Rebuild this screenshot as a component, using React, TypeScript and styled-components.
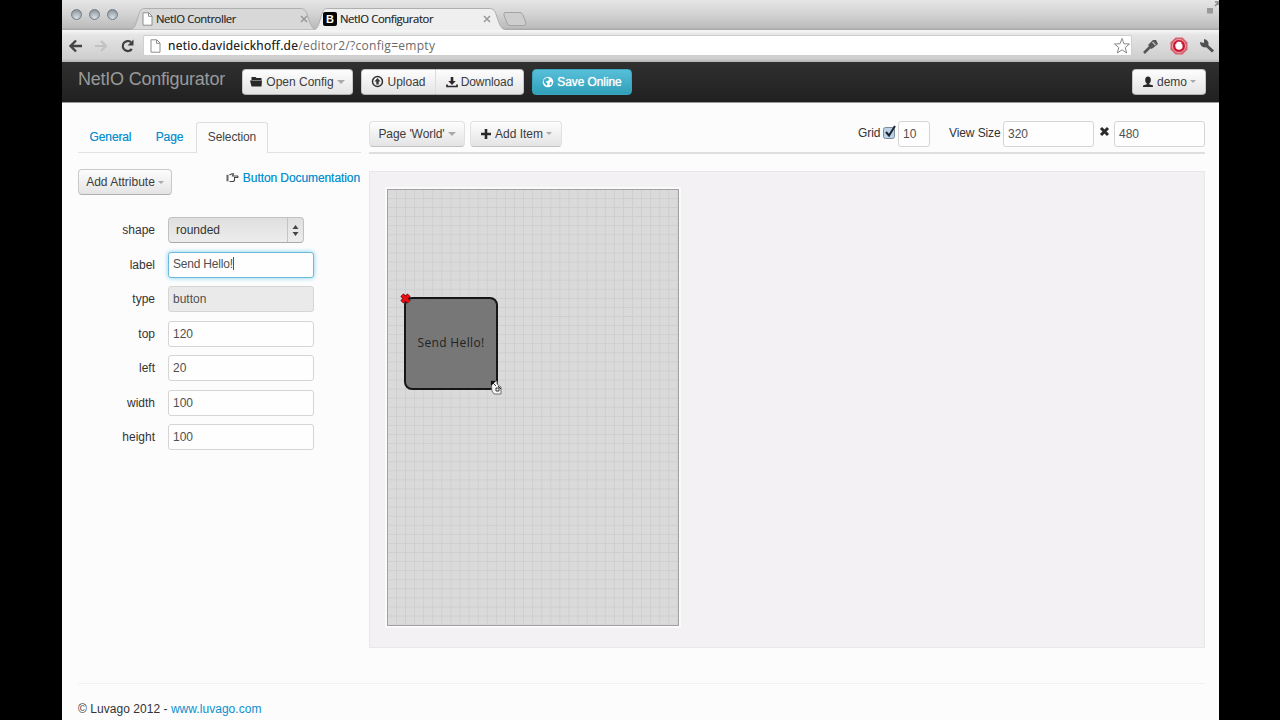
import React from "react";
import styled, { createGlobalStyle, css } from "styled-components";

const GlobalStyle = createGlobalStyle`
  * { box-sizing: border-box; }
  html, body { margin: 0; background: #000; }
  body { width: 1280px; height: 720px; overflow: hidden; }
`;

const sans = `"Liberation Sans", Arial, sans-serif`;
const chromeFont = `"Open Sans", "Noto Sans", sans-serif`;

const Screen = styled.div`
  width: 1280px;
  height: 720px;
  padding-left: 62px;
  overflow: hidden;
  background: #000;
  font-family: ${sans};
  font-size: 12px;
  color: #333;
`;
const Window = styled.div`
  width: 1157px;
  height: 720px;
  overflow: hidden;
  display: flex;
  flex-direction: column;
  background: #fdfcfd;
  white-space: nowrap;
`;

/* browser chrome */
const TitleBar = styled.div`
  height: 30px;
  flex: none;
  display: flex;
  align-items: flex-end;
  background: linear-gradient(#e6e5e5, #d5d4d4 45%, #bcbbbb 94%, #a9a8a8 97%);
`;
const Lights = styled.div`
  display: flex;
  gap: 7px;
  padding: 0 0 10px 9px;
  width: 68px;
`;
const Light = styled.i`
  width: 11px;
  height: 11px;
  border-radius: 50%;
  border: 1px solid #747c84;
  background: radial-gradient(circle at 50% 85%, #d9dfe3, #a4adb4 60%, #7e878f);
`;
const Tab = styled.div<{ $w: number; $pad: number; $end: number; $active?: boolean }>`
  position: relative;
  z-index: ${(p) => (p.$active ? 2 : 1)};
  width: ${(p) => p.$w}px;
  margin-right: -4px;
  height: 22px;
  padding: 0 ${(p) => p.$end}px 1px ${(p) => p.$pad}px;
  display: flex;
  align-items: center;
  font: 11px/16px ${chromeFont};
  color: #333;
`;
const TabShape = styled.svg`
  position: absolute;
  left: 0;
  top: 0;
  z-index: -1;
`;
const TabTitle = styled.span`
  flex: 1;
  margin-left: 3px;
  text-shadow: 0 0 0.6px #777;
  letter-spacing: -0.42px;
  font-size: 11.3px;
`;
const Favicon = styled.b`
  width: 14px;
  height: 14px;
  border-radius: 2px;
  background: #060606;
  color: #fff;
  font: bold 11px/14px ${sans};
  text-align: center;
`;
const Expand = styled.svg`
  margin-left: auto;
  align-self: flex-start;
`;
const Toolbar = styled.div`
  height: 32px;
  flex: none;
  display: flex;
  align-items: center;
  padding: 0 4px 0 6px;
  background: linear-gradient(#f7f7f7 0, #e6e5e5 5px, #cfcece 90%, #b5b5b5);
`;
const NavIcons = styled.div`
  display: flex;
  gap: 11px;
  width: 75px;
`;
const Address = styled.div`
  flex: 1;
  height: 21px;
  margin-top: -1px;
  display: flex;
  align-items: center;
  padding: 0 0 0 6px;
  border: 1px solid #d0cfcf;
  border-radius: 2px;
  background: #fff;
  font: 12px/18px ${chromeFont};
  color: #6b6b6b;
`;
const Url = styled.span`
  flex: 1;
  margin-left: 7px;
  letter-spacing: 0.29px;
  b { font-weight: 400; color: #222; text-shadow: 0 0 0.6px #888; }
`;
const Extensions = styled.div`
  width: 83px;
  display: flex;
  align-items: center;
  justify-content: space-between;
  padding-left: 10px;
`;

/* page navbar */
const NavBar = styled.div`
  height: 40px;
  flex: none;
  display: flex;
  align-items: center;
  padding: 0 13px 1px 16px;
  background: linear-gradient(#303030, #202020);
`;
const Brand = styled.div`
  width: 164px;
  padding-bottom: 5px;
  font-size: 18px;
  line-height: 20px;
  letter-spacing: -0.23px;
  color: #9a9a9a;
`;

const Button = styled.div<{ $w: number; $tone?: "info"; $ls?: number }>`
  width: ${(p) => p.$w}px;
  height: 26px;
  display: flex;
  align-items: center;
  justify-content: center;
  gap: 3px;
  border: 1px solid #c9c8c9;
  border-bottom-color: #b0b0b0;
  border-radius: 4px;
  background: linear-gradient(#fdfdfd, #e5e4e5);
  font-size: 12px;
  line-height: 14px;
  letter-spacing: ${(p) => p.$ls ?? 0}px;
  color: #3c3c3c;
  ${(p) => p.$tone === "info" && css`
    color: #fff;
    background: linear-gradient(#58bfd9, #30a0b8);
    border-color: #3ba5bd;
    text-shadow: 0 0 1px rgba(255, 255, 255, 0.8);
  `}
`;
const ButtonGroup = styled.div`
  display: flex;
  margin: 0 8px;
  ${Button}:first-child { border-radius: 4px 0 0 4px; border-right-color: #ddd; }
  ${Button}:last-child { border-radius: 0 4px 4px 0; border-left: 0; }
`;
const Spacer = styled.div`flex: 1;`;
const Caret = styled.i<{ $small?: boolean }>`
  border: ${(p) => (p.$small ? 3 : 4)}px solid transparent;
  border-bottom: 0;
  border-top-color: #aaa;
`;

/* content */
const Main = styled.div`
  height: 581px;
  flex: none;
  display: flex;
  padding: 19px 14px 0 16px;
  border-top: 1px solid #999;
`;
const Sidebar = styled.div`
  width: 283px;
  margin-right: 8px;
`;
const Tabs = styled.div`
  height: 31px;
  display: flex;
  border-bottom: 1px solid #e3e2e3;
`;
const NavTab = styled.div<{ $w: number; $active?: boolean }>`
  width: ${(p) => p.$w}px;
  height: 31px;
  padding-left: 1px;
  text-align: center;
  line-height: 30px;
  letter-spacing: -0.12px;
  color: #0a8fce;
  text-shadow: 0 0 0.6px #6bbfe4;
  ${(p) => p.$active && css`
    color: #444;
    text-shadow: none;
    padding-left: 0;
    background: #fdfcfd;
    border: 1px solid #dfdedf;
    border-bottom: 0;
    border-radius: 3px 3px 0 0;
    line-height: 29px;
  `}
`;
const SideHead = styled.div`
  display: flex;
  justify-content: space-between;
  margin-top: 16px;
  height: 48px;
`;
const DocLink = styled.div`
  display: flex;
  align-items: center;
  gap: 4px;
  height: 18px;
  margin-right: 1px;
  letter-spacing: -0.08px;
  color: #0a8fce;
  text-shadow: 0 0 0.6px #6bbfe4;
`;
const Field = styled.div`
  display: flex;
  align-items: center;
  height: 26px;
  margin-bottom: 8.55px;
`;
const Label = styled.label`
  width: 77px;
  margin-right: 13px;
  text-align: right;
`;
const Input = styled.div<{ $w: number; $focus?: boolean; $off?: boolean }>`
  width: ${(p) => p.$w}px;
  height: 26px;
  padding-left: 4px;
  line-height: 24px;
  border: 1px solid #d6d5d6;
  border-radius: 3px;
  background: ${(p) => (p.$off ? "#ebeaeb" : "#fefefe")};
  color: #505050;
  ${(p) => p.$focus && css`
    border-color: #6db9da;
    box-shadow: 0 0 5px #7fd0ee;
    letter-spacing: -0.2px;
    line-height: 23px;
  `}
`;
const TextCursor = styled.i`
  display: inline-block;
  width: 1px;
  height: 13px;
  background: #555;
  vertical-align: -2px;
`;
const Select = styled.div`
  width: 136px;
  height: 26px;
  display: flex;
  align-items: center;
  padding-left: 7px;
  border: 1px solid #c2c1c2;
  border-bottom-color: #aaa;
  border-radius: 4px;
  background: linear-gradient(#e0dfe0, #ededed);
`;
const SelectArrow = styled.span`
  margin-left: auto;
  width: 16px;
  height: 24px;
  display: flex;
  align-items: center;
  justify-content: center;
  border-left: 1px solid #c4c4c4;
`;
const Editor = styled.div`width: 836px;`;
const EditorBar = styled.div`
  height: 32px;
  display: flex;
  gap: 5px;
  border-bottom: 2px solid #e0dfe0;
`;
const EditorButton = styled(Button)`
  margin-top: -1px;
  height: 26px;
  padding-bottom: 1px;
  border-color: #e2e1e2;
  border-bottom-color: #c2c1c2;
`;
const Settings = styled.div`
  margin-left: auto;
  margin-top: -1px;
  height: 25px;
  display: flex;
  align-items: center;
`;
const SettingText = styled.span<{ $w: number; $before?: number }>`
  width: ${(p) => p.$w}px;
  margin-top: -2px;
  margin-left: ${(p) => p.$before ?? 0}px;
  letter-spacing: -0.1px;
`;
const CheckSvg = styled.svg`margin: -4px 2px 0 0;`;
const Stage = styled.div`
  height: 477px;
  margin-top: 17px;
  padding: 17px;
  border: 1px solid #e9e8e9;
  background: #f3f1f3;
`;
const Canvas = styled.div`
  position: relative;
  width: 292px;
  height: 437px;
  border: 1px solid #a3a2a3;
  box-shadow: 0 0 0 2px #fafafa;
  background-color: #dbdadb;
  background-image:
    linear-gradient(90deg, #cfcecf 1px, transparent 1px),
    linear-gradient(#cfcecf 1px, transparent 1px);
  background-size: 9.09px 9.09px;
  background-position: 8px 8px;
`;
const Widget = styled.div`
  position: absolute;
  left: 16px;
  top: 107px;
  width: 94px;
  height: 93px;
  border: 2px solid #161616;
  border-radius: 8px;
  background: #777;
  color: #222;
  letter-spacing: 0.35px;
  font: 12px/87px ${chromeFont};
  text-align: center;
`;
const Handle = styled.svg<{ $x: number; $y: number }>`
  position: absolute;
  left: ${(p) => p.$x}px;
  top: ${(p) => p.$y}px;
`;
const Footer = styled.footer`
  margin: 0 14px 0 16px;
  border-top: 1px solid #f2f1f2;
  padding-top: 18px;
  line-height: 15px;
  letter-spacing: 0.04px;
  a { color: #0a8fce; }
`;

const PageIcon = () => (
  <svg width="11" height="14" viewBox="0 0 11 14">
    <path d="M1 .8h5.8L10 4v9.2H1z" fill="#fff" stroke="#8d8d8d" />
    <path d="M6.5 1v3.3H10" fill="none" stroke="#8d8d8d" />
  </svg>
);
const CloseIcon = () => (
  <svg width="8" height="8" viewBox="0 0 8 8">
    <path d="M1 1l6 6M7 1L1 7" stroke="#989898" strokeWidth="1.5" />
  </svg>
);
const TimesIcon = () => (
  <svg width="11" height="11" viewBox="0 0 11 11">
    <path d="M2 2l7 7M9 2l-7 7" stroke="#2a2a2a" strokeWidth="3" />
  </svg>
);

const App = () => (
  <Screen>
    <GlobalStyle />
    <Window>
      <TitleBar>
        <Lights><Light /><Light /><Light /></Lights>
        <Tab $w={187} $pad={12} $end={9}>
          <TabShape width="187" height="22">
            <path d="M0 21.5C5 21 5 18 8 9C10 2 11 .5 15 .5H170C175 .5 176 3 178 9C181 18 182 21 187 21.5" fill="#d9d8d8" stroke="#b0afaf" />
          </TabShape>
          <PageIcon />
          <TabTitle>NetIO Controller</TabTitle>
          <CloseIcon />
        </Tab>
        <Tab $w={193} $pad={10} $end={15} $active>
          <TabShape width="193" height="22">
            <path d="M0 22C5 21 5 18 8 9C10 2 11 .5 15 .5H176C181 .5 182 3 184 9C187 18 188 21 193 22" fill="#f0efef" stroke="#b0afaf" />
          </TabShape>
          <Favicon>B</Favicon>
          <TabTitle>NetIO Configurator</TabTitle>
          <CloseIcon />
        </Tab>
        <svg width="26" height="20" viewBox="0 0 26 20">
          <path d="M3 2.5H18Q20 2.5 21 5L24 13Q24 15.500 22 15.500H8Q6 15.500 5 13L2 5Q1.500 2.500 3 2.500Z" fill="#cfcece" stroke="#a4a3a3" />
        </svg>
        <Expand width="12" height="16" viewBox="0 0 12 16">
          <path d="M0 8h6v5.500H0z" fill="#9a9999" />
          <path d="M8 6l3-3M8 2h3v3" fill="none" stroke="#888" strokeWidth="1.500" />
        </Expand>
      </TitleBar>
      <Toolbar>
        <NavIcons>
          <svg width="15" height="14" viewBox="0 0 15 14"><path d="M8 1.500L2.500 7L8 12.500M3 7h11" fill="none" stroke="#444" strokeWidth="2.400" /></svg>
          <svg width="15" height="14" viewBox="0 0 15 14"><path d="M7 2l5 5l-5 5M12 7H1" fill="none" stroke="#c2c2c2" strokeWidth="2.200" /></svg>
          <svg width="15" height="14" viewBox="0 0 15 14"><path d="M11.800 10A5 5 0 1 1 11 3.200" fill="none" stroke="#3f3f3f" strokeWidth="2.200" /><path d="M13.500.5V6.500H7.500z" fill="#3f3f3f" /></svg>
        </NavIcons>
        <Address>
          <PageIcon />
          <Url><b>netio.davideickhoff.de</b>/editor2/?config=empty</Url>
          <svg width="18" height="18" viewBox="0 0 18 18"><path d="M9 1.500l2 5.300 5.500.2-4.300 3.500 1.500 5.500L9 12.800 4.300 16l1.500-5.500L1.500 7 7 6.800z" fill="#fff" stroke="#888" /></svg>
        </Address>
        <Extensions>
          <svg width="17" height="17" viewBox="0 0 17 17"><path d="M2 15l6-6" stroke="#555" strokeWidth="2.600" /><path d="M6 7l5-5h3l2 4-5 4-2 1z" fill="#555" /><path d="M10.500 4l3 3" stroke="#bbb" strokeWidth="1.400" /></svg>
          <svg width="18" height="18" viewBox="0 0 18 18"><path d="M5.500.5h7l5 5v7l-5 5h-7l-5-5v-7z" fill="#d8606f" /><circle cx="9" cy="9" r="6.500" fill="#c91931" stroke="#eaa9b1" /><path d="M5.200 7.500L6.500 6.500V5.500L8 4.700h2L11.500 5.500V7L12.500 7.500V10Q12 12.800 9 12.800T5.500 10z" fill="#fff" /></svg>
          <svg width="16" height="16" viewBox="0 0 16 16"><path d="M6.500 6.500L14 13.500" stroke="#505050" strokeWidth="3" /><path d="M1 4l4 1V1Q10 2 9.500 6.500Q8 10.500 4 9Q1 7.500 1 4z" fill="#505050" /></svg>
        </Extensions>
      </Toolbar>
      <NavBar>
        <Brand>NetIO Configurator</Brand>
        <Button $w={111}>
          <svg width="13" height="11" viewBox="0 0 13 11"><path d="M1.500 4.500V1h4l1 1h5v2.500z" fill="#292929" /><path d="M0 4.500h12l-.5 6h-10z" fill="#292929" /><path d="M2.500 4.500h9" stroke="#999" strokeWidth=".6" /></svg>
          Open Config <Caret />
        </Button>
        <ButtonGroup>
          <Button $w={75}>
            <svg width="13" height="13" viewBox="0 0 13 13"><circle cx="6.500" cy="6.500" r="5" fill="none" stroke="#333" strokeWidth="1.500" /><path d="M6.500 3L9.500 6.500H7.700V9.500H5.300V6.500H3.500z" fill="#333" /></svg>
            Upload
          </Button>
          <Button $w={88} $ls={-0.1}>
            <svg width="12" height="12" viewBox="0 0 12 12"><path d="M4.700 1h2.600v4h2.500L6 9 2.200 5h2.500z" fill="#292929" /><path d="M1 8.500v2h10v-2" fill="none" stroke="#292929" strokeWidth="1.700" /></svg>
            Download
          </Button>
        </ButtonGroup>
        <Button $w={100} $tone="info" $ls={-0.1}>
          <svg width="12" height="12" viewBox="0 0 12 12"><circle cx="6" cy="6" r="5.300" fill="#fff" /><path d="M5 1.500L7.500 3 6 5 3.500 5.500 5.500 7.500 5 10 2 7 1.500 4zM8 6l2 .5-1 2.500-1.500 0z" fill="#43adc5" /></svg>
          Save Online
        </Button>
        <Spacer />
        <Button $w={74}>
          <svg width="12" height="12" viewBox="0 0 12 12"><ellipse cx="6" cy="4" rx="2.800" ry="3.500" fill="#292929" /><path d="M4.800 6h2.400v2.200L11 9.500V11H1V9.500l3.800-1.300z" fill="#292929" /></svg>
          demo <Caret $small />
        </Button>
      </NavBar>
      <Main>
        <Sidebar>
          <Tabs>
            <NavTab $w={64}>General</NavTab>
            <NavTab $w={54}>Page</NavTab>
            <NavTab $w={72} $active>Selection</NavTab>
          </Tabs>
          <SideHead>
            <Button $w={94}><span>Add Attribute</span><Caret $small /></Button>
            <DocLink>
              <svg width="13" height="10" viewBox="0 0 13 10"><path d="M3.500 2L6 .8h1.500L6.500 3H11.500q1 1 0 1.500H8M3.500 8.500h4l1-1V4.500" fill="none" stroke="#444" strokeWidth="1.100" /><path d="M.5 1.800h2v6.500h-2z" fill="#666" /></svg>
              Button Documentation
            </DocLink>
          </SideHead>
          <Field>
            <Label>shape</Label>
            <Select>
              rounded
              <SelectArrow>
                <svg width="7" height="11" viewBox="0 0 7 11"><path d="M3.500 0L6.500 4H.5zM3.500 11L6.500 7H.5z" fill="#444" /></svg>
              </SelectArrow>
            </Select>
          </Field>
          <Field><Label>label</Label><Input $w={146} $focus>Send Hello!<TextCursor /></Input></Field>
          <Field><Label>type</Label><Input $w={146} $off>button</Input></Field>
          <Field><Label>top</Label><Input $w={146}>120</Input></Field>
          <Field><Label>left</Label><Input $w={146}>20</Input></Field>
          <Field><Label>width</Label><Input $w={146}>100</Input></Field>
          <Field><Label>height</Label><Input $w={146}>100</Input></Field>
        </Sidebar>
        <Editor>
          <EditorBar>
            <EditorButton $w={96} $ls={-0.08}>Page 'World' <Caret /></EditorButton>
            <EditorButton $w={92}>
              <svg width="12" height="12" viewBox="0 0 12 12"><path d="M6 1v10M1 6h10" stroke="#292929" strokeWidth="2.600" /></svg>
              Add Item <Caret $small />
            </EditorButton>
            <Settings>
              <SettingText $w={25}>Grid</SettingText>
              <CheckSvg width="13" height="14" viewBox="0 0 13 14"><rect x=".5" y="2.500" width="11" height="11" rx="2" fill="#b9d2e8" stroke="#7d8b99" /><path d="M3 7l3 3.500L12 1" fill="none" stroke="#1b2430" strokeWidth="2" /></CheckSvg>
              <Input $w={32}>10</Input>
              <SettingText $w={54} $before={19}>View Size</SettingText>
              <Input $w={91}>320</Input>
              <SettingText $w={15} $before={5}><TimesIcon /></SettingText>
              <Input $w={91}>480</Input>
            </Settings>
          </EditorBar>
          <Stage>
            <Canvas>
              <Widget>Send Hello!</Widget>
              <Handle $x={12} $y={103} width="11" height="11" viewBox="0 0 11 11">
                <path d="M2 2l7 7M9 2l-7 7" stroke="#5a1111" strokeWidth="4.500" />
                <path d="M2 2l7 7M9 2l-7 7" stroke="#f00c12" strokeWidth="3" />
              </Handle>
              <Handle $x={102} $y={190} width="13" height="15" viewBox="0 0 13 15">
                <path d="M1 1h6v3l4 3v7H4L2 11z" fill="#f5f5f5" stroke="#555" strokeWidth=".8" />
                <path d="M1 1h5L1 6z" fill="#111" />
                <path d="M3 3l3 3M6 8h3v3H6zM8 6l3 3" fill="none" stroke="#333" />
              </Handle>
            </Canvas>
          </Stage>
        </Editor>
      </Main>
      <Footer>© Luvago 2012 - <a>www.luvago.com</a></Footer>
    </Window>
  </Screen>
);

export default App;
